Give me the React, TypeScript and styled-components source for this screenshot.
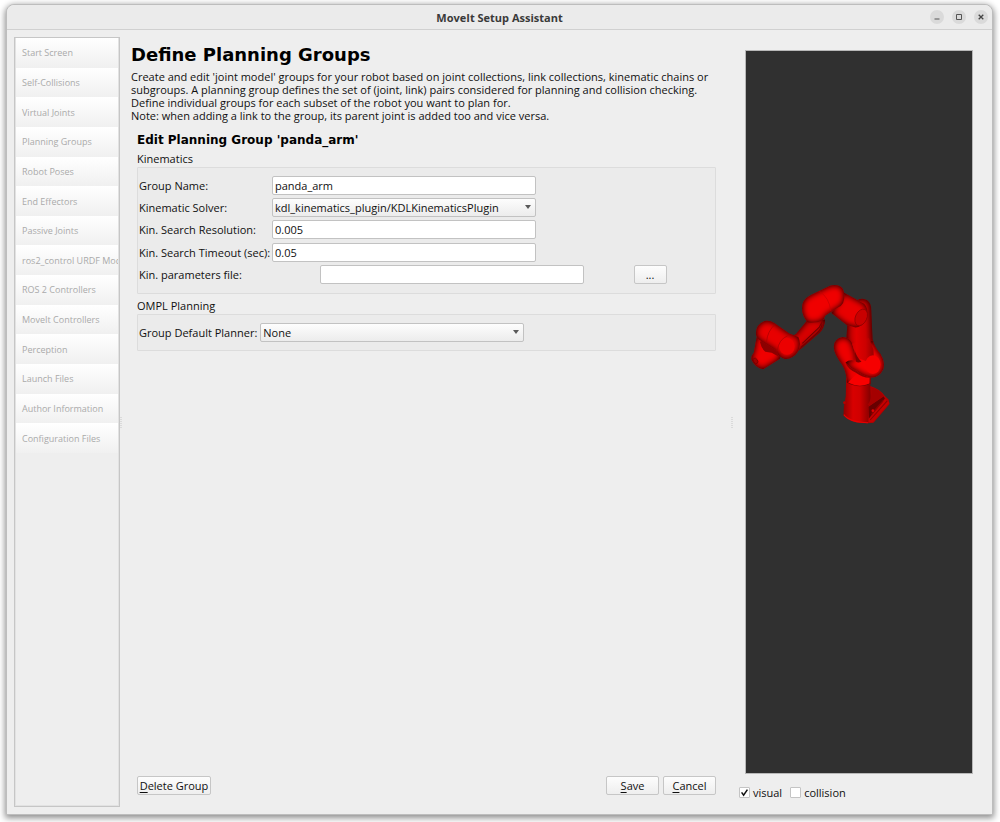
import React, { useState } from "react";
import styled, { createGlobalStyle } from "styled-components";

const uiFont = '"Open Sans", "Noto Sans", sans-serif';
const headingFont = '"DejaVu Sans", sans-serif';

const GlobalStyle = createGlobalStyle`
  * { box-sizing: border-box; }
  body {
    margin: 0;
    background: #fff;
    color: #101010;
    font: 11px/13px ${uiFont};
  }
  button, input, select { font: inherit; color: inherit; margin: 0; }
`;

const Desktop = styled.div`
  display: flex;
  min-height: 100vh;
  padding: 4px 7px 7px 6px;
`;

const Window = styled.div`
  display: flex;
  flex: 1;
  flex-direction: column;
  min-width: 0;
  background: #eee;
  border: 1px solid #bdbdbd;
  border-radius: 8px 8px 0 0;
  box-shadow: 0 2px 6px 1px rgba(0, 0, 0, 0.45);
`;

const TitleBar = styled.header`
  display: grid;
  grid-template-columns: 1fr auto 1fr;
  align-items: center;
  height: 25px;
  background: #ebebeb;
  border-bottom: 1px solid #d0d0d0;
  border-radius: 8px 8px 0 0;
`;

const WindowTitle = styled.span`
  grid-column: 2;
  color: #3a3a3a;
  font-weight: 700;
`;

const WindowControls = styled.div`
  display: flex;
  justify-content: flex-end;
  gap: 8px;
  padding-right: 4px;
`;

const WindowControl = styled.button`
  display: flex;
  width: 14px;
  height: 14px;
  padding: 0;
  border: 0;
  border-radius: 50%;
  background: #dadada;
`;

const Content = styled.div`
  display: flex;
  flex: 1;
  padding: 7px 6px 7px 7px;
`;

const Sidebar = styled.nav`
  flex: none;
  width: 106px;
  overflow: hidden;
  border: 1px solid #c6c6c6;
  box-shadow: inset 0 0 0 1px #e2e2e2;
`;

const StepList = styled.ul`
  display: grid;
  grid-template-rows: repeat(14, 1fr);
  height: 415px;
  margin: 0 1px;
  padding: 0;
  list-style: none;
`;

const Step = styled.li`
  display: flex;
  align-items: center;
  overflow: hidden;
  padding-left: 6px;
  background: linear-gradient(#fff, #f0f0f0);
  color: #aaa;
  font-size: 9px;
  white-space: nowrap;
`;

const Splitter = styled.div<{ $width: number }>`
  display: flex;
  flex: none;
  align-items: center;
  width: ${(p) => p.$width}px;
  &::before {
    content: "";
    width: 2px;
    height: 11px;
    background: repeating-linear-gradient(#dadada 0 1px, transparent 1px 2px);
  }
`;

const Main = styled.main`
  display: flex;
  flex: 1;
  flex-direction: column;
  min-width: 0;
  padding: 7px 15px 12px 0;
`;

const PageTitle = styled.h1`
  margin: 0;
  color: #000;
  font: 700 18px/22px ${headingFont};
`;

const Intro = styled.p`
  margin: 4px 0 0;
  white-space: nowrap;
`;

const Editor = styled.form`
  display: flex;
  flex: 1;
  flex-direction: column;
  padding: 11px 0 0 6px;
`;

const EditorTitle = styled.h2`
  margin: 0 0 5px;
  color: #000;
  font: 700 12px/14px ${headingFont};
`;

const Group = styled.fieldset`
  min-width: 0;
  margin: 0 0 5px;
  padding: 0;
  border: 0;
`;

const GroupTitle = styled.legend`
  padding: 0 0 2px;
`;

const Frame = styled.div`
  padding: 6px 1px 7px;
  background: #ebebeb;
  border: 1px solid #dcdcdc;
  border-radius: 1px;
`;

const FormRows = styled.div`
  display: grid;
  grid-template-columns: 133px 1fr;
  grid-template-rows: repeat(5, 1fr);
  align-items: center;
  height: 112px;
`;

const InlineRow = styled.div`
  display: flex;
  align-items: center;
  gap: 3px;
  height: 22px;
`;

const FileRow = styled.div`
  display: flex;
  justify-content: center;
  gap: 50px;
`;

const TextInput = styled.input`
  width: 264px;
  height: 19px;
  padding: 0 2px;
  background: #fff;
  border: 1px solid #c2c2c2;
  border-radius: 2px;
  outline: 0;
`;

const SelectBox = styled.div`
  position: relative;
  width: 264px;
  height: 19px;
  svg {
    position: absolute;
    top: 7px;
    right: 5px;
    pointer-events: none;
  }
`;

const SelectInput = styled.select`
  display: block;
  appearance: none;
  width: 100%;
  height: 100%;
  padding: 0 16px 0 2px;
  background: linear-gradient(#fdfdfd, #ececec);
  border: 1px solid #c2c2c2;
  border-radius: 2px;
  line-height: 17px;
  outline: 0;
`;

const PushButton = styled.button<{ $width: number }>`
  width: ${(p) => p.$width}px;
  height: 19px;
  padding: 0;
  background: linear-gradient(#fdfdfd, #eee);
  border: 1px solid #c6c6c6;
  border-radius: 2px;
  white-space: nowrap;
  u { text-underline-offset: 2px; }
`;

const Actions = styled.footer`
  display: flex;
  gap: 4px;
  margin-top: auto;
  button:first-child { margin-right: auto; }
`;

const Preview = styled.aside`
  display: flex;
  flex: none;
  flex-direction: column;
  width: 247px;
  padding-top: 13px;
`;

const Viewport = styled.div`
  display: flex;
  flex: 1;
  contain: size;
  margin: 0 13px 0 6px;
  background: #303030;
  border: 1px solid #b8b8b8;
`;

const Scene = styled.svg`
  flex: 1;
  min-width: 0;
`;

const Toggles = styled.div`
  display: flex;
  gap: 8px;
  padding: 12px 0 8px;
`;

const Toggle = styled.label`
  display: flex;
  align-items: center;
  gap: 3px;
`;

const CheckBox = styled.span`
  display: grid;
  width: 11px;
  height: 11px;
  input, svg { grid-area: 1 / 1; }
  svg { pointer-events: none; }
`;

const CheckInput = styled.input`
  appearance: none;
  width: 11px;
  height: 11px;
  background: #fff;
  border: 1px solid #c4c4c4;
  border-radius: 1px;
  & + svg { visibility: hidden; }
  &:checked + svg { visibility: visible; }
`;

const steps = [
  "Start Screen",
  "Self-Collisions",
  "Virtual Joints",
  "Planning Groups",
  "Robot Poses",
  "End Effectors",
  "Passive Joints",
  "ros2_control URDF Model",
  "ROS 2 Controllers",
  "MoveIt Controllers",
  "Perception",
  "Launch Files",
  "Author Information",
  "Configuration Files",
];

function Combo({ id, value }: { id: string; value: string }) {
  return (
    <SelectBox>
      <SelectInput id={id} defaultValue={value}>
        <option>{value}</option>
      </SelectInput>
      <svg width="6" height="4" viewBox="0 0 6 4" aria-hidden="true">
        <path d="M0 0h6L3 4z" fill="#5a5a5a" />
      </svg>
    </SelectBox>
  );
}

function Check({ label, initial }: { label: string; initial: boolean }) {
  const [on, setOn] = useState(initial);
  return (
    <Toggle>
      <CheckBox>
        <CheckInput type="checkbox" checked={on} onChange={(e) => setOn(e.target.checked)} />
        <svg width="11" height="11" viewBox="0 0 11 11" aria-hidden="true">
          <path d="M2.6 5.4L4.6 8.2L8.4 2.6" fill="none" stroke="#111" strokeWidth="1.5" />
        </svg>
      </CheckBox>
      {label}
    </Toggle>
  );
}

function Robot() {
  return (
    <Scene viewBox="0 0 225 720" role="img" aria-label="Robot model">
      <defs>
        <filter id="round" x="-10%" y="-10%" width="120%" height="120%" colorInterpolationFilters="sRGB">
          <feGaussianBlur in="SourceAlpha" stdDeviation="9" result="soft" />
          <feComposite in="SourceAlpha" in2="soft" operator="out" result="rim" />
          <feColorMatrix in="rim" values="0 0 0 0 0.24  0 0 0 0 0  0 0 0 0 0  0 0 0 1.3 0" result="shade" />
          <feMerge>
            <feMergeNode in="SourceGraphic" />
            <feMergeNode in="shade" />
          </feMerge>
        </filter>
        <linearGradient id="column" x1="0" x2="1">
          <stop offset="0" stopColor="#900000" />
          <stop offset="0.35" stopColor="#d80000" />
          <stop offset="0.6" stopColor="#d00000" />
          <stop offset="1" stopColor="#800000" />
        </linearGradient>
        <linearGradient id="upper" gradientUnits="userSpaceOnUse" x1="320" x2="398" y1="0" y2="0">
          <stop offset="0" stopColor="#b80000" />
          <stop offset="0.4" stopColor="#e00000" />
          <stop offset="0.75" stopColor="#cc0000" />
          <stop offset="1" stopColor="#a00000" />
        </linearGradient>
      </defs>
      <g transform="translate(-7 218) scale(.3333)">
        <path d="M392 348Q420 356 436 378L447 389L450 402L402 458L380 460L376 380Z" fill="#b40000" />
        <path d="M320 325L392 330L394 400L387 408L386 458Q335 463 312 436Q312 406 319 378Z" fill="url(#column)" />
        <path d="M313 434Q330 457 386 458" fill="none" stroke="#e80000" strokeWidth="3" />
        <path d="M387 410L432 379L436 386L388 446Z" fill="#670000" />
        <path d="M395 430L430 390L432 396L397 437Z" fill="#8c0000" />
        <circle cx="400" cy="422" r="4" fill="#e00000" />
        <path d="M388 446L437 388L449 398L400 457L388 457Z" fill="#c40000" />
        <path d="M392 450L443 393" stroke="#880000" strokeWidth="3" />
        <path d="M395 351Q423 360 433 379L390 407L384 404Q398 390 395 351Z" fill="#a40000" />
        <circle cx="315" cy="398" r="4" fill="#b80000" />

        <path d="M326 130L350 94Q366 82 383 92Q395 101 395 120L399 208Q405 235 423 253L400 290L345 275L321 205Z" fill="url(#upper)" filter="url(#round)" />
        <path d="M283 231Q284 207 309 202Q329 203 337 219L349 256L348 276L394 314L393 342Q358 358 322 338Q322 308 309 286Q284 254 283 231Z" fill="#ee0000" filter="url(#round)" />
        <path d="M326 338Q358 355 390 341L390 322L358 305Z" fill="#f80000" />
        <path d="M318 278Q328 268 345 272L346 235L399 212Q407 236 423 253Q438 275 431 298Q420 322 397 323Q371 321 350 302Q332 296 318 278Z" fill="#f80000" filter="url(#round)" />
        <path d="M338 222L388 205L402 240L404 284L350 262Z" fill="url(#upper)" />
        <path d="M345 240Q351 262 366 276Q355 280 349 275Z" fill="#7c0000" />
        <path d="M318 280Q335 296 350 302Q373 320 397 323Q374 327 348 308Q327 298 318 280Z" fill="#8c0000" />
        <ellipse cx="400" cy="284" rx="23" ry="28" fill="#f60000" />

        <path d="M276 130L314 69L374 102Q388 117 383 143Q372 170 348 173L322 166Z" fill="#e80000" filter="url(#round)" />
        <ellipse cx="365" cy="143" rx="17" ry="26" transform="rotate(25 365 143)" fill="#c80000" stroke="#860000" strokeWidth="2" />

        <path d="M205 150L257 149Q257 171 241 189L187 235L160 255L148 205L170 193Z" fill="#d80000" filter="url(#round)" />
        <path d="M189 221L240 172L247 158M185 233L232 191Q246 178 248 164" fill="none" stroke="#700000" strokeWidth="3" />
        <path d="M188 115Q188 90 213 77L272 48Q295 42 309 56Q320 76 311 100Q306 109 297 113L258 137Q252 163 205 158Q188 139 188 115Z" fill="#f00000" filter="url(#round)" />
        <path d="M240 65Q270 84 274 124" fill="none" stroke="#c40000" strokeWidth="2" />

        <path d="M52 204L86 190L122 240L122 267L72 298Q48 295 37 270Q35 259 44 248Z" fill="#f00000" filter="url(#round)" />
        <path d="M62 216Q66 235 78 246L97 249L119 261L113 240L76 208Z" fill="#8c0000" />
        <ellipse cx="49" cy="273" rx="6" ry="9" transform="rotate(-35 49 273)" fill="#a00000" stroke="#700000" strokeWidth="2" />
        <path d="M50 190Q51 164 76 154Q91 151 105 160L150 191L177 202Q188 225 174 248Q162 266 138 268Q115 262 112 243L62 211Q50 205 50 190Z" fill="#e80000" filter="url(#round)" />
        <ellipse cx="143" cy="230" rx="23" ry="25" fill="#ec0000" />
        <path d="M114 243Q118 209 145 198M82 216Q84 185 108 163" fill="none" stroke="#a40000" strokeWidth="2" />
      </g>
    </Scene>
  );
}

export default function App() {
  return (
    <>
      <GlobalStyle />
      <Desktop>
        <Window>
          <TitleBar>
            <WindowTitle>MoveIt Setup Assistant</WindowTitle>
            <WindowControls>
              <WindowControl aria-label="Minimize">
                <svg width="14" height="14" viewBox="0 0 14 14"><path d="M4.500 9h5" stroke="#555" /></svg>
              </WindowControl>
              <WindowControl aria-label="Maximize">
                <svg width="14" height="14" viewBox="0 0 14 14"><path d="M4.500 4.500h5v5h-5z" fill="none" stroke="#555" /></svg>
              </WindowControl>
              <WindowControl aria-label="Close">
                <svg width="14" height="14" viewBox="0 0 14 14"><path d="M4.700 4.700l4.600 4.600M9.300 4.700l-4.600 4.600" stroke="#444" strokeWidth="1.300" /></svg>
              </WindowControl>
            </WindowControls>
          </TitleBar>
          <Content>
            <Sidebar>
              <StepList>
                {steps.map((s) => <Step key={s}>{s}</Step>)}
              </StepList>
            </Sidebar>
            <Splitter $width={11} />
            <Main>
              <PageTitle>Define Planning Groups</PageTitle>
              <Intro>
                Create and edit 'joint model' groups for your robot based on joint collections, link collections, kinematic chains or<br />
                subgroups. A planning group defines the set of (joint, link) pairs considered for planning and collision checking.<br />
                Define individual groups for each subset of the robot you want to plan for.<br />
                Note: when adding a link to the group, its parent joint is added too and vice versa.
              </Intro>
              <Editor onSubmit={(e) => e.preventDefault()}>
                <EditorTitle>Edit Planning Group 'panda_arm'</EditorTitle>
                <Group>
                  <GroupTitle>Kinematics</GroupTitle>
                  <Frame>
                    <FormRows>
                      <label htmlFor="name">Group Name:</label>
                      <TextInput id="name" defaultValue="panda_arm" />
                      <label htmlFor="solver">Kinematic Solver:</label>
                      <Combo id="solver" value="kdl_kinematics_plugin/KDLKinematicsPlugin" />
                      <label htmlFor="resolution">Kin. Search Resolution:</label>
                      <TextInput id="resolution" defaultValue="0.005" />
                      <label htmlFor="timeout">Kin. Search Timeout (sec):</label>
                      <TextInput id="timeout" defaultValue="0.05" />
                      <label htmlFor="params">Kin. parameters file:</label>
                      <FileRow>
                        <TextInput id="params" />
                        <PushButton type="button" $width={33}>...</PushButton>
                      </FileRow>
                    </FormRows>
                  </Frame>
                </Group>
                <Group>
                  <GroupTitle>OMPL Planning</GroupTitle>
                  <Frame>
                    <InlineRow>
                      <label htmlFor="planner">Group Default Planner:</label>
                      <Combo id="planner" value="None" />
                    </InlineRow>
                  </Frame>
                </Group>
                <Actions>
                  <PushButton type="button" $width={74}><u>D</u>elete Group</PushButton>
                  <PushButton type="submit" $width={53}><u>S</u>ave</PushButton>
                  <PushButton type="button" $width={53}><u>C</u>ancel</PushButton>
                </Actions>
              </Editor>
            </Main>
            <Splitter $width={8} />
            <Preview>
              <Viewport><Robot /></Viewport>
              <Toggles>
                <Check label="visual" initial />
                <Check label="collision" initial={false} />
              </Toggles>
            </Preview>
          </Content>
        </Window>
      </Desktop>
    </>
  );
}
